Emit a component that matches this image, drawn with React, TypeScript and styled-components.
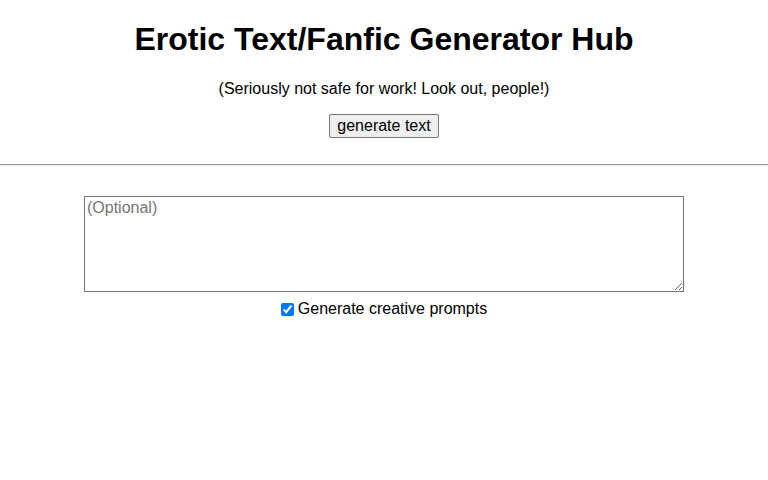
import React, { useState } from "react";
import styled, { createGlobalStyle } from "styled-components";

const GlobalStyle = createGlobalStyle`
  html, body {
    margin: 0;
    padding: 0;
    background: #ffffff;
  }
  body {
    font-family: "Liberation Sans", Arial, sans-serif;
    color: #000000;
  }
`;

const Page = styled.div`
  display: flex;
  flex-direction: column;
  align-items: center;
  width: 100%;
`;

const Header = styled.header`
  display: flex;
  flex-direction: column;
  align-items: center;
  width: 100%;
  padding-top: 21px;
`;

const Title = styled.h1`
  margin: 0;
  font-size: 32px;
  line-height: 37px;
  font-weight: bold;
  text-align: center;
`;

const Warning = styled.p`
  margin: 22px 0 0;
  font-size: 16px;
  line-height: 18px;
  text-align: center;
`;

const GenerateButton = styled.button`
  margin-top: 16px;
  font-family: "Liberation Sans", Arial, sans-serif;
  font-size: 16px;
  line-height: 18px;
  padding: 2px 7px;
  color: #000000;
  background: #efefef;
  border: 1px solid #767676;
  border-radius: 2px;
  cursor: pointer;

  &:hover {
    background: #e5e5e5;
  }
`;

const Divider = styled.hr`
  width: 100%;
  margin: 26px 0 0;
  border: 0;
  border-top: 1px solid #9a9a9a;
  border-bottom: 1px solid #eeeeee;
  height: 0;
`;

const Form = styled.section`
  display: flex;
  flex-direction: column;
  align-items: center;
  margin-top: 30px;
`;

const PromptInput = styled.textarea`
  box-sizing: border-box;
  width: 600px;
  height: 96px;
  padding: 2px;
  font-family: "Liberation Sans", Arial, sans-serif;
  font-size: 16px;
  line-height: 18px;
  border: 1px solid #767676;
  border-radius: 0;
  resize: both;

  &::placeholder {
    color: #757575;
  }
`;

const CheckRow = styled.label`
  display: flex;
  align-items: center;
  margin-top: 8px;
  font-size: 16px;
  line-height: 18px;
  cursor: pointer;
`;

const Check = styled.input`
  width: 13px;
  height: 13px;
  margin: 0 4px 0 0;
  accent-color: #0075ff;
`;

export default function App() {
  const [prompt, setPrompt] = useState("");
  const [creative, setCreative] = useState(true);

  return (
    <>
      <GlobalStyle />
      <Page>
        <Header>
          <Title>Erotic Text/Fanfic Generator Hub</Title>
          <Warning>(Seriously not safe for work! Look out, people!)</Warning>
          <GenerateButton type="button">generate text</GenerateButton>
        </Header>
        <Divider />
        <Form>
          <PromptInput
            placeholder="(Optional)"
            value={prompt}
            onChange={(e) => setPrompt(e.target.value)}
          />
          <CheckRow>
            <Check
              type="checkbox"
              checked={creative}
              onChange={(e) => setCreative(e.target.checked)}
            />
            Generate creative prompts
          </CheckRow>
        </Form>
      </Page>
    </>
  );
}
